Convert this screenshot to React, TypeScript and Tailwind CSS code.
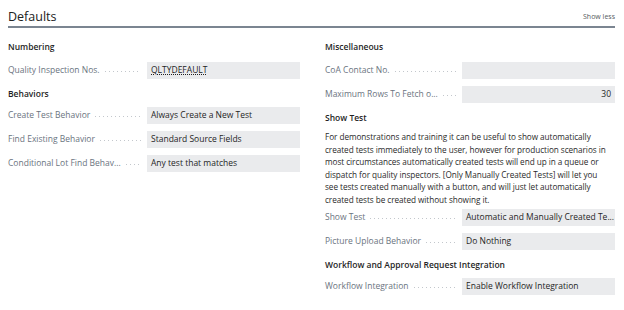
const FONT = "font-['Segoe_UI','Open_Sans','Noto_Sans',sans-serif]";

type FieldProps = {
  label: string;
  value?: string;
  align?: "left" | "right";
  link?: boolean;
  wide?: boolean;
};

function Leader() {
  return (
    <div className="flex-1 h-px ml-[5px] mr-[6px] mt-[2px] bg-[linear-gradient(to_right,#c3c7cc_1px,transparent_1px)] bg-[length:4px_1px] bg-repeat-x" />
  );
}

function Field({ label, value = "", align = "left", link = false, wide = true }: FieldProps) {
  return (
    <div className="flex items-center h-[17px] mb-[7px]">
      <div className={`flex items-center shrink-0 ${wide ? "w-[139px]" : "w-[137px]"}`}>
        <span className="text-[8.5px] text-[#6b7480] whitespace-nowrap">{label}</span>
        <Leader />
      </div>
      <div
        className={`flex-1 h-[17px] bg-[#eaebed] flex items-center px-[4px] text-[8.5px] text-[#1f1f1f] whitespace-nowrap overflow-hidden ${
          align === "right" ? "justify-end" : ""
        }`}
      >
        <span className={link ? "underline decoration-dotted underline-offset-[1px]" : ""}>{value}</span>
      </div>
    </div>
  );
}

function Heading({ children, className = "" }: { children: string; className?: string }) {
  return (
    <div className={`h-4 flex items-center text-[8.5px] font-semibold text-[#1f1f1f] ${className}`}>
      {children}
    </div>
  );
}

export default function App() {
  return (
    <div className={`w-[624px] h-[310px] bg-white pl-2 pr-[9px] ${FONT}`}>
      {/* Header */}
      <div className="flex items-end justify-between h-[28px] border-b-2 border-[#7b8591] pb-[3px]">
        <span className="text-[12.5px] text-[#212121] leading-none">Defaults</span>
        <span className="text-[7px] text-[#555b62] leading-none mb-[3px]">Show less</span>
      </div>

      <div className="grid grid-cols-[292px_290px] gap-x-[25px]">
        {/* Left column */}
        <div className="pt-[11px]">
          <Heading className="mb-[7px]">Numbering</Heading>
          <Field label="Quality Inspection Nos." value="QLTYDEFAULT" link />
          <Heading className="mt-[3px] mb-[5px]">Behaviors</Heading>
          <Field label="Create Test Behavior" value="Always Create a New Test" />
          <Field label="Find Existing Behavior" value="Standard Source Fields" />
          <Field label="Conditional Lot Find Behav..." value="Any test that matches" />
        </div>

        {/* Right column */}
        <div className="pt-[11px]">
          <Heading className="mb-[7px]">Miscellaneous</Heading>
          <Field label="CoA Contact No." wide={false} />
          <Field label="Maximum Rows To Fetch o..." value="30" align="right" wide={false} />
          <Heading className="mt-[4px]">Show Test</Heading>
          <p className="mt-[5px] text-[8.2px] leading-[12.5px] text-[#2a2a2a] tracking-[-0.05px]">
            For demonstrations and training it can be useful to show automatically<br />
            created tests immediately to the user, however for production scenarios in<br />
            most circumstances automatically created tests will end up in a queue or<br />
            dispatch for quality inspectors. [Only Manually Created Tests] will let you<br />
            see tests created manually with a button, and will just let automatically<br />
            created tests be created without showing it.
          </p>
          <div className="mt-[3px]">
            <Field label="Show Test" value="Automatic and Manually Created Te..." wide={false} />
            <Field label="Picture Upload Behavior" value="Do Nothing" wide={false} />
          </div>
          <Heading className="mb-[5px]">Workflow and Approval Request Integration</Heading>
          <Field label="Workflow Integration" value="Enable Workflow Integration" wide={false} />
        </div>
      </div>
    </div>
  );
}
